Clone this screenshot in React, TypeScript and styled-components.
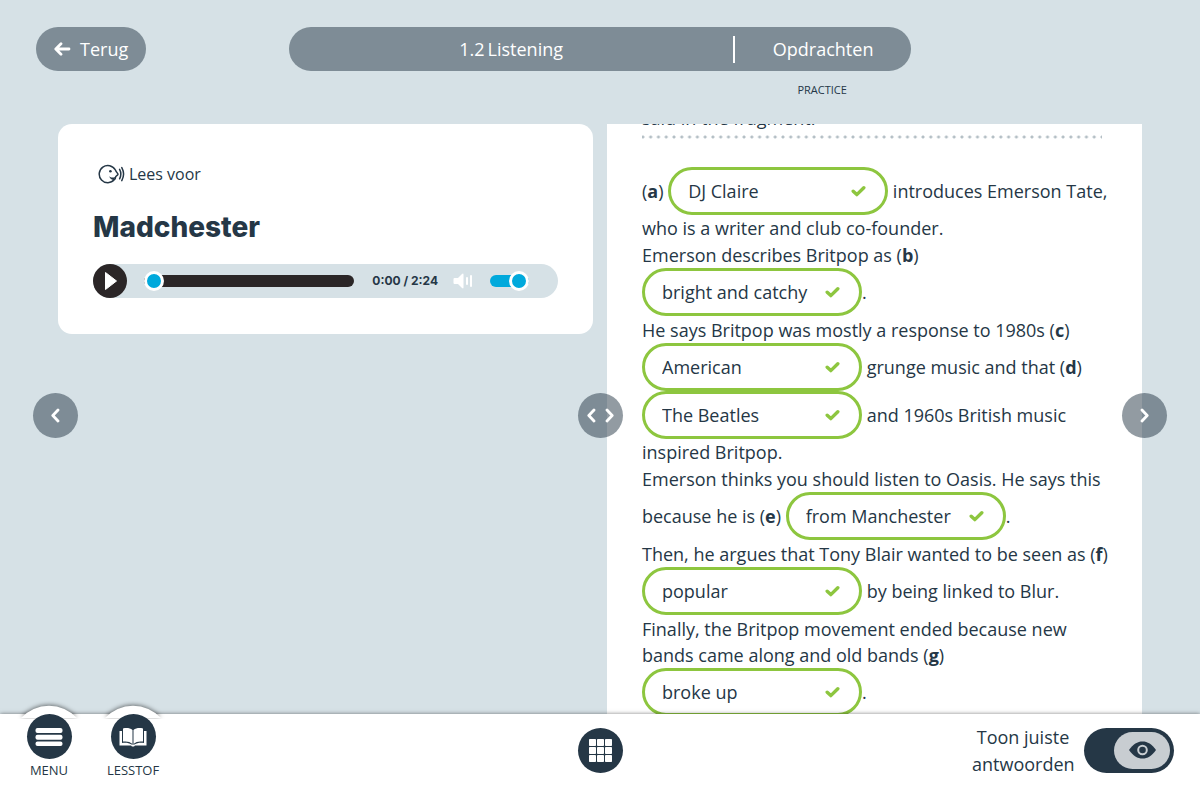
import React, { useState } from "react";
import styled, { createGlobalStyle } from "styled-components";

const navy = "#253746";
const mist = "#d6e1e6";
const veil = "rgba(37, 55, 70, 0.5)";
const green = "#8dc63f";
const cyan = "#00a9dc";
const ink = "#2b2627";

const GlobalStyle = createGlobalStyle`
  * { box-sizing: border-box; }
  body {
    margin: 0;
    background: ${mist};
    color: ${navy};
    font: 18px/27px "Open Sans", "Noto Sans", sans-serif;
  }
  button, input { font: inherit; color: inherit; }
  button { border: 0; padding: 0; background: none; cursor: pointer; }
  svg { display: block; }
`;

const Page = styled.div`
  position: relative;
  display: flex;
  flex-direction: column;
  height: 100vh;
  overflow: hidden;
`;

const Header = styled.header`
  display: grid;
  grid-template-columns: 1fr minmax(0, 622px) 1fr;
  align-items: start;
  padding: 27px 36px 0;
`;

const BackButton = styled.button`
  justify-self: start;
  display: flex;
  align-items: center;
  gap: 9px;
  height: 44px;
  padding: 0 18px;
  border-radius: 22px;
  background: ${veil};
  color: #fff;
`;

const Crumbs = styled.nav`
  display: grid;
  grid-template-columns: 5fr 2fr;
  text-align: center;
`;

const CrumbBar = styled.div`
  grid-column: 1 / -1;
  display: grid;
  grid-template-columns: subgrid;
  align-items: center;
  height: 44px;
  border-radius: 22px;
  background: ${veil};
`;

const Crumb = styled.a<{ $divided?: boolean }>`
  display: flex;
  justify-content: center;
  gap: 3px;
  color: #fff;
  text-decoration: none;
  border-left: ${(p) => (p.$divided ? "2px solid #fff" : "0")};
`;

const CrumbNote = styled.span`
  grid-column: 2;
  padding-top: 10px;
  font-size: 11px;
  line-height: 17px;
`;

const Main = styled.main`
  flex: 1;
  min-height: 0;
  display: grid;
  grid-template-columns: 1fr 1fr;
  gap: 14px;
  padding: 26px 58px 0;
`;

const SourceCard = styled.section`
  align-self: start;
  padding: 36px 35px;
  border-radius: 14px;
  background: #fff;
`;

const ReadAloud = styled.button`
  display: flex;
  align-items: center;
  gap: 3px;
  height: 28px;
  padding-left: 5px;
  font-size: 16px;
`;

const SourceTitle = styled.h1`
  margin: 21px 0 19px;
  font: 800 28px/36px Inter, sans-serif;
`;

const Player = styled.div`
  display: flex;
  align-items: center;
  height: 34px;
  padding-right: 29px;
  border-radius: 17px;
  background: ${mist};
`;

const PlayButton = styled.button`
  flex: none;
  display: grid;
  place-items: center;
  width: 34px;
  height: 34px;
  margin-right: 17px;
  border-radius: 50%;
  background: ${ink};
`;

const Slider = styled.input<{ $track: string }>`
  appearance: none;
  min-width: 0;
  height: 20px;
  margin: 0;
  background: none;

  &::-webkit-slider-runnable-track {
    height: 12px;
    border-radius: 6px;
    background: ${(p) => p.$track};
  }
  &::-webkit-slider-thumb {
    appearance: none;
    width: 20px;
    height: 20px;
    margin-top: -4px;
    border: 3px solid #fff;
    border-radius: 50%;
    background: ${cyan};
  }
`;

const SeekSlider = styled(Slider)`
  flex: 1;
`;

const VolumeSlider = styled(Slider)`
  width: 39px;
`;

const Time = styled.span`
  padding: 0 15px 0 18px;
  font: 700 12px/20px Inter, sans-serif;
  white-space: nowrap;
`;

const MuteButton = styled.button`
  margin-right: 17px;
`;

const TaskPanel = styled.section`
  min-height: 0;
  overflow: hidden;
  padding: 0 40px 0 35px;
  background: #fff;
`;

const Instruction = styled.p`
  margin: -19px 0 0;
  height: 34px;
  background: radial-gradient(circle, #b4bfc5 1px, transparent 2px) -3px 100% / calc(100% / 59) 4px repeat-x;
`;

const Exercise = styled.div`
  display: flex;
  flex-direction: column;
  gap: 1px;
  margin: 28px -8px 0 0;
`;

const Sentence = styled.p`
  margin: 0;
  line-height: 26px;
`;

const Gap = styled.label`
  display: inline-flex;
  align-items: center;
  width: 220px;
  height: 48px;
  padding: 0 19px 0 17px;
  border: 3px solid ${green};
  border-radius: 24px;
  background: #fff;
  vertical-align: baseline;
`;

const GapInput = styled.input`
  flex: 1;
  min-width: 0;
  height: 26px;
  padding: 0;
  border: 0;
  outline: 0;
  background: none;
`;

const RoundButton = styled.button<{ $fill?: string }>`
  display: flex;
  align-items: center;
  justify-content: center;
  gap: 9px;
  width: 45px;
  height: 45px;
  border-radius: 50%;
  background: ${(p) => p.$fill ?? veil};
`;

const FloatingButton = styled(RoundButton)<{ $at: "left" | "center" | "right" }>`
  position: absolute;
  top: 50%;
  ${(p) => p.$at === "left" && "left: 33px;"}
  ${(p) => p.$at === "center" && "left: 50%; margin-left: -22px;"}
  ${(p) => p.$at === "right" && "right: 33px;"}
`;

const Footer = styled.footer`
  position: relative;
  flex: none;
  display: grid;
  grid-template-columns: 1fr auto 1fr;
  align-items: center;
  height: 72px;
  background: #fff;
  box-shadow: 0 0 4px rgba(0, 0, 0, 0.5);
`;

const Shortcuts = styled.div`
  align-self: start;
  display: flex;
  gap: 30px;
  padding-left: 22px;
`;

const Shortcut = styled.button`
  position: relative;
  width: 54px;
  font-size: 13px;
  line-height: 22px;
`;

const Bump = styled.svg`
  position: absolute;
  top: -9px;
  left: -3px;
  overflow: visible;
  filter: drop-shadow(0 -1px 2px rgba(0, 0, 0, 0.5));
  clip-path: inset(-8px -4px 0);
`;

const ShortcutDisc = styled.span`
  position: relative;
  display: grid;
  place-items: center;
  width: 45px;
  height: 45px;
  margin: 0 auto;
  border-radius: 50%;
  background: ${navy};
`;

const AnswerSwitch = styled.label`
  justify-self: end;
  display: flex;
  align-items: center;
  gap: 10px;
  padding-right: 26px;
  text-align: center;
  cursor: pointer;
`;

const SwitchText = styled.span`
  width: 102px;
  padding-top: 2px;
`;

const SwitchTrack = styled.span`
  position: relative;
  display: flex;
  justify-content: flex-start;
  width: 90px;
  height: 45px;
  padding: 4px;
  border-radius: 23px;
  background: ${navy};

  &:has(input:checked) {
    justify-content: flex-end;
  }
`;

const SwitchInput = styled.input`
  position: absolute;
  inset: 0;
  width: 100%;
  height: 100%;
  margin: 0;
  opacity: 0;
`;

const SwitchKnob = styled.span`
  display: grid;
  place-items: center;
  width: 56px;
  height: 37px;
  border-radius: 19px;
  background: #c8cdd1;
`;

const Chevron = ({ flip = false }: { flip?: boolean }) => (
  <svg width="9" height="15" viewBox="0 0 9 15" fill="none" stroke="#fff" strokeWidth="2.8" strokeLinecap="round" strokeLinejoin="round" aria-hidden="true">
    <path d={flip ? "M2 2l5.2 5.5L2 13" : "M7 2L1.8 7.5 7 13"} />
  </svg>
);

const ShortcutBump = () => (
  <Bump width="60" height="14" viewBox="0 0 60 14" aria-hidden="true">
    <path d="M2 13A38 38 0 0 1 58 13z" fill="#fff" />
  </Bump>
);

const Answer = ({ name, value }: { name: string; value: string }) => {
  const [text, setText] = useState(value);
  return (
    <Gap>
      <GapInput aria-label={`Antwoord ${name}`} value={text} onChange={(e) => setText(e.target.value)} />
      <svg width="15" height="12" viewBox="0 0 15 12" fill="none" stroke={green} strokeWidth="3.4" strokeLinecap="round" strokeLinejoin="round" aria-hidden="true">
        <path d="M2.2 6.2l3.6 3.4 7-6.9" />
      </svg>
    </Gap>
  );
};

export default function App() {
  const [position, setPosition] = useState(0);
  const [volume, setVolume] = useState(100);
  const [showAnswers, setShowAnswers] = useState(true);

  return (
    <>
      <GlobalStyle />
      <Page>
        <Header>
          <BackButton type="button">
            <svg width="17" height="14" viewBox="0 0 17 14" fill="none" stroke="#fff" strokeWidth="2.8" strokeLinecap="round" strokeLinejoin="round" aria-hidden="true">
              <path d="M15 7H2M7 1.8L1.800 7 7 12.200" />
            </svg>
            Terug
          </BackButton>
          <Crumbs>
            <CrumbBar>
              <Crumb href="#paragraaf">
                <span>1.2</span>
                <span>Listening</span>
              </Crumb>
              <Crumb href="#opdrachten" $divided>Opdrachten</Crumb>
            </CrumbBar>
            <CrumbNote>PRACTICE</CrumbNote>
          </Crumbs>
        </Header>

        <Main>
          <SourceCard>
            <ReadAloud type="button">
              <svg width="28" height="20" viewBox="0 0 28 20" fill="none" stroke={navy} strokeWidth="1.5" strokeLinecap="round" strokeLinejoin="round" aria-hidden="true">
                <path d="M17.400 6A8.600 8.600 0 1 0 16.400 15.600c1.400-1.200 1-1.800 1.200-2.800.2-.9 2.400-1.700 2.400-2.600 0-.7-1.700-2-2.600-4.200z" />
                <circle cx="12.400" cy="7.200" r="1.300" fill={navy} stroke="none" />
                <path d="M11.200 12.200c1.500 1.500 3.600 1.500 6 .7l-1 3.200c-2.600-.3-4.400-1.600-5-3.900z" fill={navy} stroke="none" />
                <path d="M21.600 5.400c1.600 3 1.600 6.400 0 9.400M23.800 3.600c2.300 4.200 2.300 8.800 0 13" />
              </svg>
              Lees voor
            </ReadAloud>
            <SourceTitle>Madchester</SourceTitle>
            <Player>
              <PlayButton type="button" aria-label="Afspelen">
                <svg width="16" height="20" viewBox="0 0 16 20" aria-hidden="true">
                  <path d="M3.500 1.500L14.500 10 3.500 18.500z" fill="#fff" stroke="#fff" strokeLinejoin="round" />
                </svg>
              </PlayButton>
              <SeekSlider type="range" aria-label="Positie" min={0} max={144} value={position} $track={ink} onChange={(e) => setPosition(Number(e.target.value))} />
              <Time>0:00 / 2:24</Time>
              <MuteButton type="button" aria-label="Dempen">
                <svg width="20" height="16" viewBox="0 0 20 16" fill="#fff" aria-hidden="true">
                  <path d="M1.500 5H5l4-4q1.500-1 1.500.6v12.800q0 1.600-1.500.6l-4-4H1.500Q.5 11 .5 10V6q0-1 1-1z" />
                  <rect x="13" y="4" width="2" height="8" rx="1" />
                  <rect x="17" y="2" width="2" height="12" rx="1" />
                </svg>
              </MuteButton>
              <VolumeSlider type="range" aria-label="Volume" min={0} max={100} value={volume} $track={cyan} onChange={(e) => setVolume(Number(e.target.value))} />
            </Player>
          </SourceCard>

          <TaskPanel>
            <Instruction>said in the fragment.</Instruction>
            <Exercise>
              <Sentence>
                (<b>a</b>) <Answer name="a" value="DJ Claire" /> introduces Emerson Tate, who is a writer and club co-founder.
              </Sentence>
              <Sentence>
                Emerson describes Britpop as (<b>b</b>) <Answer name="b" value="bright and catchy" />.
              </Sentence>
              <Sentence>
                He says Britpop was mostly a response to 1980s (<b>c</b>) <Answer name="c" value="American" /> grunge music and that (<b>d</b>){" "}
                <Answer name="d" value="The Beatles" /> and 1960s British music inspired Britpop.
              </Sentence>
              <Sentence>
                Emerson thinks you should listen to Oasis. He says this because he is (<b>e</b>) <Answer name="e" value="from Manchester" />.
              </Sentence>
              <Sentence>
                Then, he argues that Tony Blair wanted to be seen as (<b>f</b>) <Answer name="f" value="popular" /> by being linked to Blur.
              </Sentence>
              <Sentence>
                Finally, the Britpop movement ended because new bands came along and old bands (<b>g</b>) <Answer name="g" value="broke up" />.
              </Sentence>
            </Exercise>
          </TaskPanel>
        </Main>

        <FloatingButton type="button" $at="left" aria-label="Vorige">
          <Chevron />
        </FloatingButton>
        <FloatingButton type="button" $at="center" aria-label="Verdeling aanpassen">
          <Chevron />
          <Chevron flip />
        </FloatingButton>
        <FloatingButton type="button" $at="right" aria-label="Volgende">
          <Chevron flip />
        </FloatingButton>

        <Footer>
          <Shortcuts>
            <Shortcut type="button">
              <ShortcutBump />
              <ShortcutDisc>
                <svg width="28" height="20" viewBox="0 0 28 20" fill="#fff" aria-hidden="true">
                  <rect x="0.500" y="1" width="27" height="5" rx="2" />
                  <rect x="0.500" y="7.700" width="27" height="5" rx="2" />
                  <rect x="0.500" y="14.400" width="27" height="4.600" rx="2" />
                </svg>
              </ShortcutDisc>
              MENU
            </Shortcut>
            <Shortcut type="button">
              <ShortcutBump />
              <ShortcutDisc>
                <svg width="28" height="20" viewBox="0 0 28 20" aria-hidden="true">
                  <path d="M.5 4H3v12c3-.6 7-.4 9.500 1.500h3C18 15.600 22 15.400 25 16V4h2.500v14.500H16l-1 1h-2l-1-1H.5z" fill="#fff" />
                  <path d="M4 1.500C7.500.5 11 1 13.500 3v14C11 14.600 7.500 14 4 14.600zM24 1.500C20.500.5 17 1 14.500 3v14c2.500-2.400 6-3 9.500-2.400z" fill="#fff" />
                </svg>
              </ShortcutDisc>
              LESSTOF
            </Shortcut>
          </Shortcuts>

          <RoundButton type="button" $fill={navy} aria-label="Overzicht">
            <svg width="23" height="23" viewBox="0 0 23 23" fill="#fff" aria-hidden="true">
              {[0, 8, 16].flatMap((y) => [0, 8, 16].map((x) => <rect key={`${x}-${y}`} x={x} y={y} width="7" height="7" rx="0.700" />))}
            </svg>
          </RoundButton>

          <AnswerSwitch>
            <SwitchText>Toon juiste antwoorden</SwitchText>
            <SwitchTrack>
              <SwitchInput type="checkbox" checked={showAnswers} onChange={(e) => setShowAnswers(e.target.checked)} />
              <SwitchKnob>
                <svg width="27" height="18" viewBox="0 0 27 18" aria-hidden="true">
                  <path d="M0 9C4 3 8.500.4 13.500.4S23 3 27 9c-4 6-8.500 8.600-13.500 8.600S4 15 0 9z" fill={navy} />
                  <circle cx="13.500" cy="9" r="4.300" fill={navy} stroke="#c8cdd1" strokeWidth="2" />
                </svg>
              </SwitchKnob>
            </SwitchTrack>
          </AnswerSwitch>
        </Footer>
      </Page>
    </>
  );
}
